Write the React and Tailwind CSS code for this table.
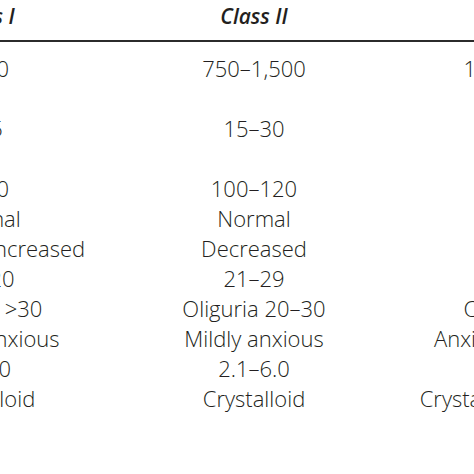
import React from "react";

const rows = [
  { a: "<750", b: "750–1,500", c: "1,500–2,000", tall: true },
  { a: "<15", b: "15–30", c: "30–40", tall: true },
  { a: "<100", b: "100–120", c: "120–140" },
  { a: "Normal", b: "Normal", c: "Reduced" },
  { a: "Normal or increased", b: "Decreased", c: "Reduced" },
  { a: "14–20", b: "21–29", c: "30–40" },
  { a: "Normal >30", b: "Oliguria 20–30", c: "Critical 5–15" },
  { a: "Slightly anxious", b: "Mildly anxious", c: "Anxious, confused" },
  { a: "0–2.0", b: "2.1–6.0", c: "6.1–10" },
  { a: "Crystalloid", b: "Crystalloid", c: "Crystalloid and blood" },
];

const App = () => {
  return (
    <div className="w-[474px] h-[474px] overflow-hidden bg-white">
      <div className="-ml-[151px] w-[810px] font-['Open_Sans',sans-serif] leading-[30px] text-[#231f20]">
        {/* header */}
        <div className="grid grid-cols-3 pt-px pb-[9px] border-b-2 border-[#2b2b2b] text-center text-[21px] italic font-semibold">
          <div>Class I</div>
          <div>Class II</div>
          <div>Class III</div>
        </div>

        <div className="pt-[11px] text-[22px] font-light">
          {rows.map((r, i) => (
            <div
              key={i}
              className={
                "grid grid-cols-3 text-center whitespace-nowrap " +
                (r.tall ? "h-[60px]" : "h-[30px]")
              }
            >
              <div>{r.a}</div>
              <div>{r.b}</div>
              <div>{r.c}</div>
            </div>
          ))}
        </div>
      </div>
    </div>
  );
};

export default App;
